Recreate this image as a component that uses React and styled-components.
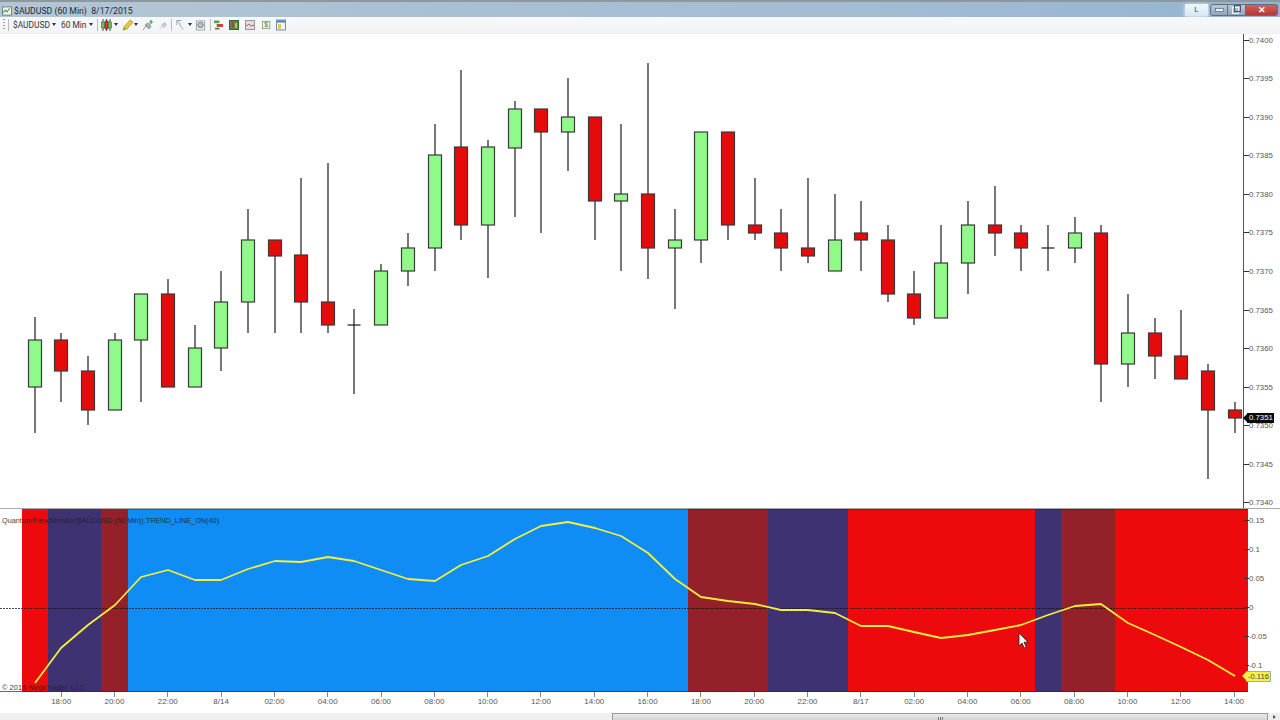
import React from "react";
import styled, { createGlobalStyle } from "styled-components";

const GREEN = "#90f98a";
const RED = "#e60b0b";

// x, wick top, wick bottom, body top, body bottom, colour
const candles = [
  [35, 317, 433, 340, 387, "g"],
  [61, 333, 402, 340, 371, "r"],
  [88, 356, 425, 371, 410, "r"],
  [115, 333, 410, 340, 410, "g"],
  [141, 294, 402, 294, 340, "g"],
  [168, 279, 387, 294, 387, "r"],
  [195, 325, 387, 348, 387, "g"],
  [221, 271, 371, 302, 348, "g"],
  [248, 209, 333, 240, 302, "g"],
  [275, 240, 333, 240, 256, "r"],
  [301, 178, 333, 255, 302, "r"],
  [328, 163, 333, 302, 325, "r"],
  [354, 309, 394, 325, 325, "d"],
  [381, 264, 325, 271, 325, "g"],
  [408, 233, 286, 248, 271, "g"],
  [435, 124, 271, 155, 248, "g"],
  [461, 70, 240, 147, 225, "r"],
  [488, 140, 278, 147, 225, "g"],
  [515, 101, 217, 109, 148, "g"],
  [541, 109, 233, 109, 132, "r"],
  [568, 78, 171, 117, 132, "g"],
  [595, 117, 240, 117, 201, "r"],
  [621, 124, 271, 194, 201, "g"],
  [648, 63, 279, 194, 248, "r"],
  [675, 209, 309, 240, 248, "g"],
  [701, 132, 263, 132, 240, "g"],
  [728, 132, 240, 132, 225, "r"],
  [755, 178, 240, 225, 233, "r"],
  [781, 209, 271, 233, 248, "r"],
  [808, 178, 263, 248, 256, "r"],
  [835, 194, 271, 240, 271, "g"],
  [861, 201, 271, 233, 240, "r"],
  [888, 225, 302, 240, 294, "r"],
  [914, 271, 325, 294, 318, "r"],
  [941, 225, 318, 263, 318, "g"],
  [968, 201, 294, 225, 263, "g"],
  [995, 186, 256, 225, 233, "r"],
  [1021, 225, 271, 233, 248, "r"],
  [1048, 225, 271, 248, 248, "d"],
  [1075, 217, 263, 233, 248, "g"],
  [1101, 225, 402, 233, 364, "r"],
  [1128, 294, 387, 333, 364, "g"],
  [1155, 318, 379, 333, 356, "r"],
  [1181, 310, 379, 356, 379, "r"],
  [1208, 364, 479, 371, 410, "r"],
  [1235, 402, 433, 410, 418, "r"],
];

const bands = [
  [22, 48, "#ec0a0c"],
  [48, 101, "#3f3272"],
  [101, 128, "#942029"],
  [128, 688, "#0f8df5"],
  [688, 768, "#942029"],
  [768, 848, "#3f3272"],
  [848, 1035, "#ec0a0c"],
  [1035, 1061, "#3f3272"],
  [1061, 1115, "#942029"],
  [1115, 1248, "#ec0a0c"],
];

const trend =
  "35,683 61,648 88,625 115,605 141,577 168,570 195,580 221,580 248,569 275,561 301,562 328,557 354,561 381,570 408,579 435,581 461,565 488,556 515,539 541,526 568,522 595,528 621,536 648,553 675,579 701,597 728,601 755,604 781,610 808,610 835,613 861,626 888,626 914,632 941,638 968,635 995,630 1021,625 1048,615 1075,606 1101,604 1128,623 1155,635 1181,647 1208,660 1235,676";

const prices = ["0.7400", "0.7395", "0.7390", "0.7385", "0.7380", "0.7375", "0.7370", "0.7365", "0.7360", "0.7355", "0.7350", "0.7345", "0.7340"];
const levels = ["0.15", "0.1", "0.05", "0", "-0.05", "-0.1"];
const times = ["18:00", "20:00", "22:00", "8/14", "02:00", "04:00", "06:00", "08:00", "10:00", "12:00", "14:00", "16:00", "18:00", "20:00", "22:00", "8/17", "02:00", "04:00", "06:00", "08:00", "10:00", "12:00", "14:00"];

const GlobalStyle = createGlobalStyle`
  html, body {
    margin: 0;
    padding: 0;
    background: #fff;
  }
  body {
    font-family: "Liberation Sans", Arial, sans-serif;
    overflow: hidden;
  }
`;

const Window = styled.div`
  display: flex;
  flex-direction: column;
  width: 1280px;
  height: 720px;
  overflow: hidden;
  background: #fff;
`;

const TitleBar = styled.div`
  display: flex;
  align-items: center;
  flex: 0 0 17px;
  box-sizing: border-box;
  padding: 2px 2px 0 2px;
  border-top: 2px solid #8d979e;
  background: linear-gradient(90deg, #b4c6d4 0%, #a9c0d3 35%, #a2bcd4 70%, #93b4d2 100%);
`;

const TitleText = styled.span`
  margin-left: 2px;
  font-family: Roboto, sans-serif;
  font-size: 8.7px;
  color: #1d2a36;
  white-space: pre;
`;

const WindowButtons = styled.div`
  display: flex;
  margin-left: auto;
  height: 12px;
  margin-top: -2px;
`;

const LayoutButton = styled.div`
  display: flex;
  align-items: center;
  justify-content: center;
  width: 23px;
  margin-right: 2px;
  font-size: 8px;
  color: #33506a;
  background: linear-gradient(#f0f7fc, #d8e8f4);
  box-shadow: 0 1px 4px rgba(255, 255, 255, 0.8);
`;

const CaptionButton = styled.div`
  display: flex;
  align-items: center;
  justify-content: center;
  width: ${(p) => p.$w}px;
  box-sizing: border-box;
  border: 1px solid #5d6f7f;
  border-left-width: ${(p) => (p.$first ? 1 : 0)}px;
  border-radius: ${(p) => p.$radius || 0};
  background: ${(p) => p.$bg};
  color: #fff;
  font-size: 9px;
  font-weight: bold;
`;

const Toolbar = styled.div`
  display: flex;
  align-items: center;
  flex: 0 0 17px;
  box-sizing: border-box;
  padding: 0 0 1px 3px;
  background: linear-gradient(#f7f8fa, #f3f4f6);
  border-bottom: 1px solid #eceef0;
  font-family: Roboto, sans-serif;
  font-size: 8.4px;
  color: #333;
`;

const Grip = styled.div`
  width: 2px;
  height: 12px;
  margin-right: 2px;
  background: repeating-linear-gradient(#999 0 1px, transparent 1px 3px);
`;

const Separator = styled.div`
  flex: none;
  width: 1px;
  height: 12px;
  margin: 0 ${(p) => p.$right ?? 3}px 0 ${(p) => p.$left ?? 3}px;
  background: #b9bdc2;
`;

const ToolText = styled.span`
  flex: none;
  width: ${(p) => p.$w}px;
  margin-left: ${(p) => p.$left ?? 0}px;
  white-space: nowrap;
`;

const Caret = styled.span`
  flex: none;
  width: 0;
  height: 0;
  margin-left: ${(p) => p.$left ?? 4}px;
  border: 2px solid transparent;
  border-top: 3px solid #333;
  border-bottom: 0;
`;

const ToolIcon = styled.svg`
  flex: none;
  width: ${(p) => p.$w || 11}px;
  height: 12px;
  margin-left: ${(p) => p.$left ?? 0}px;
`;

const ChartPane = styled.div`
  position: relative;
  display: flex;
  flex: 0 0 475px;
  box-sizing: border-box;
  border-bottom: 1px solid #aaa;
`;

const PriceAxis = styled.div`
  display: flex;
  flex-direction: column;
  gap: 28.58px;
  flex: 1;
  padding-top: 1px;
  margin-left: -1px;
  border-left: 1px solid #555;
`;

const Tick = styled.div`
  display: flex;
  align-items: center;
  height: 10px;
  font-size: 7.8px;
  color: #555;
  &::before {
    content: "";
    width: 5px;
    height: 1px;
    background: #333;
  }
`;

const PriceTag = styled.div`
  position: absolute;
  left: 1247px;
  top: 379px;
  height: 10px;
  padding: 0 1px 0 2px;
  font-size: 7.8px;
  line-height: 10px;
  color: #fff;
  background: #0a0a0a;
  &::before {
    content: "";
    position: absolute;
    left: -4px;
    top: 1px;
    border: 4px solid transparent;
    border-left: 0;
    border-right-color: #0a0a0a;
  }
`;

const IndicatorPane = styled.div`
  position: relative;
  display: flex;
  flex: 0 0 183px;
`;

const LevelAxis = styled.div`
  position: relative;
  display: flex;
  flex-direction: column;
  gap: 19.2px;
  flex: 1;
  padding-top: 6px;
  margin-left: -4px;
`;

const Legend = styled.div`
  position: absolute;
  left: 2px;
  top: 7px;
  font-size: 7.3px;
  line-height: 10px;
  color: #222;
  opacity: 0.85;
  white-space: nowrap;
`;

const Copyright = styled.div`
  position: absolute;
  left: 2px;
  bottom: 0;
  font-size: 7.5px;
  line-height: 9px;
  color: #222;
  opacity: 0.85;
  white-space: nowrap;
`;

const LevelTag = styled.div`
  position: absolute;
  left: 1246px;
  top: 162px;
  height: 9px;
  padding: 0 1px 0 2px;
  font-size: 7.6px;
  line-height: 9px;
  color: #444;
  background: #f3f24c;
  border: 1px solid #aaa;
  border-left: 0;
  &::before {
    content: "";
    position: absolute;
    left: -4px;
    top: 0;
    border: 4.5px solid transparent;
    border-left: 0;
    border-right-color: #f3f24c;
  }
`;

const TimeAxis = styled.div`
  display: flex;
  flex: 0 0 21px;
  box-sizing: border-box;
  padding-left: 34.5px;
`;

const TimeTick = styled.div`
  display: flex;
  flex-direction: column;
  align-items: center;
  flex: 0 0 53.32px;
  font-size: 8px;
  line-height: 10px;
  color: #555;
  &::before {
    content: "";
    width: 1px;
    height: 5px;
    background: #888;
  }
`;

const ScrollBar = styled.div`
  display: flex;
  flex: 1;
  background: #efefef;
`;

const ScrollTrack = styled.div`
  flex: 0 0 612px;
`;

const ScrollThumb = styled.div`
  display: flex;
  justify-content: center;
  flex: 1;
  box-sizing: border-box;
  padding: 3px 0 0 0;
  border: 1px solid #999;
  border-bottom: 0;
  background: linear-gradient(#e9e9e9, #d4d4d4);
  &::before {
    content: "";
    width: 5px;
    height: 3px;
    background: repeating-linear-gradient(90deg, #777 0 1px, transparent 1px 2px);
  }
`;

const ScrollArrow = styled.div`
  flex: 0 0 12px;
  display: flex;
  justify-content: center;
  padding-top: 2px;
  &::before {
    content: "";
    height: 0;
    border: 2.5px solid transparent;
    border-left: 3px solid #555;
    border-right: 0;
  }
`;

const ChartSvg = styled.svg`
  flex: none;
  display: block;
`;

function Candle({ c }) {
  const [x, wt, wb, bt, bb, kind] = c;
  return (
    <g>
      <line x1={x} x2={x} y1={wt} y2={wb} stroke="#1c1c1c" strokeWidth="1.2" />
      {kind === "d" ? (
        <line x1={x - 6.5} x2={x + 6.5} y1={bt} y2={bt} stroke="#1c1c1c" strokeWidth="1.2" />
      ) : (
        <rect
          x={x - 6.5}
          y={bt}
          width="13"
          height={bb - bt}
          fill={kind === "g" ? GREEN : RED}
          stroke="#3a3a3a"
          strokeWidth="1.2"
        />
      )}
    </g>
  );
}

function Indicator() {
  return (
    <ChartSvg width="1248" height="183" viewBox="0 509 1248 183">
      {bands.map(([a, b, fill]) => (
        <rect key={a} x={a} y="509" width={b - a} height="183" fill={fill} />
      ))}
      <line x1="128" x2="1248" y1="509.5" y2="509.5" stroke="#000" strokeOpacity="0.25" />
      <line x1="0" x2="1248" y1="691.5" y2="691.5" stroke="#134" strokeOpacity="0.7" />
      <line x1="0" x2="1248" y1="608.5" y2="608.5" stroke="#111" strokeOpacity="0.75" strokeDasharray="2 1" />
      <polyline points={trend} fill="none" stroke="#f4ee3e" strokeWidth="1.8" strokeLinejoin="round" />
      <path
        d="M1019 633 v13 l3-3 2.2 5 2-.9-2.2-4.900 h4z"
        fill="#fff"
        stroke="#222"
        strokeWidth="0.8"
      />
    </ChartSvg>
  );
}

export default function App() {
  return (
    <Window>
      <GlobalStyle />
      <TitleBar>
        <ToolIcon viewBox="0 0 11 12" $w={10}>
          <rect x="0.5" y="1.500" width="10" height="9" fill="#f2f6ee" stroke="#56808f" />
          <path d="M1.500 8l2-3 2 2 3-4" fill="none" stroke="#3f9a4a" strokeWidth="1.2" />
        </ToolIcon>
        <TitleText>$AUDUSD (60 Min)  8/17/2015</TitleText>
        <WindowButtons>
          <LayoutButton>L</LayoutButton>
          <CaptionButton $w={18} $first $radius="3px 0 0 3px" $bg="linear-gradient(#bccad6, #8ea5b9)">
            <svg width="9" height="4" viewBox="0 0 9 4">
              <rect x="0.5" y="0.5" width="8" height="3" fill="#e9eef2" stroke="#465766" strokeWidth="0.6" />
            </svg>
          </CaptionButton>
          <CaptionButton $w={18} $bg="linear-gradient(#bccad6, #8ea5b9)">
            <svg width="9" height="9" viewBox="0 0 9 9">
              <rect x="0.500" y="2.500" width="6" height="6" fill="none" stroke="#f0f3f5" />
              <rect x="2.500" y="0.500" width="6" height="6" fill="none" stroke="#465766" />
            </svg>
          </CaptionButton>
          <CaptionButton $w={32} $radius="0 3px 3px 0" $bg="linear-gradient(#d0625c, #b23a36)">
            ✕
          </CaptionButton>
        </WindowButtons>
      </TitleBar>

      <Toolbar>
        <Grip />
        <Separator $left={1} $right={4} />
        <ToolText $w={35}>$AUDUSD</ToolText>
        <Caret $left={4} />
        <ToolText $w={24} $left={5}>60 Min</ToolText>
        <Caret $left={4} />
        <Separator $left={4} $right={3} />
        <ToolIcon viewBox="0 0 11 12">
          <path d="M2 0v12M5.500 0v12M9 0v12" stroke="#444" />
          <rect x="0.500" y="3" width="3" height="6" fill="#6fc04c" stroke="#3a6a2c" strokeWidth="0.6" />
          <rect x="4" y="2" width="3" height="8" fill="#d33" stroke="#722" strokeWidth="0.6" />
          <rect x="7.500" y="3" width="3" height="6" fill="#6fc04c" stroke="#3a6a2c" strokeWidth="0.6" />
        </ToolIcon>
        <Caret $left={2} />
        <ToolIcon viewBox="0 0 12 12" $w={12} $left={4}>
          <path d="M1 11l1-3 6-7 3 2-6 7z" fill="#e9c83c" stroke="#a58a24" strokeWidth="0.7" />
          <path d="M1 11l1-3 2 2z" fill="#7fb23e" />
        </ToolIcon>
        <Caret $left={0} />
        <ToolIcon viewBox="0 0 12 12" $w={12} $left={4}>
          <path d="M1 11l3-4M3 6l3-2 3 3-2 3z" fill="#a6b2bb" stroke="#7b8790" strokeWidth="0.8" />
          <path d="M9 1v4M7 3h4" stroke="#3fa34a" strokeWidth="1.2" />
        </ToolIcon>
        <ToolIcon viewBox="0 0 12 12" $w={10} $left={5}>
          <path d="M1 11l3-4M3 6l4-3 2 3-3 3z" fill="#c8cccf" stroke="#b4b8bb" strokeWidth="0.8" />
        </ToolIcon>
        <Separator $left={2} $right={4} />
        <ToolIcon viewBox="0 0 11 12" $w={10}>
          <path d="M1 1l4 4-1 1 4 5M1 1h5M1 1v5" fill="none" stroke="#8b939a" strokeWidth="0.9" />
        </ToolIcon>
        <Caret $left={2} />
        <ToolIcon viewBox="0 0 12 12" $w={11} $left={3}>
          <rect x="1.500" y="1.500" width="9" height="10" fill="#eef0f0" stroke="#9ba3a8" />
          <circle cx="6" cy="6" r="3" fill="#b9c2c8" stroke="#6f787e" />
        </ToolIcon>
        <Separator $left={4} $right={3} />
        <ToolIcon viewBox="0 0 11 12" $w={10}>
          <rect x="0" y="1" width="6" height="3" fill="#57a644" />
          <rect x="3" y="5" width="7" height="3" fill="#c93434" />
          <rect x="1" y="9" width="5" height="2" fill="#4d8f3d" />
        </ToolIcon>
        <ToolIcon viewBox="0 0 11 12" $w={11} $left={5}>
          <rect x="0.500" y="1.500" width="9" height="9" fill="#4f8a4a" stroke="#38663a" />
          <rect x="3" y="3" width="2" height="6" fill="#c43a3a" />
          <rect x="6" y="4" width="2" height="5" fill="#a8d24e" />
        </ToolIcon>
        <ToolIcon viewBox="0 0 11 12" $w={11} $left={5}>
          <rect x="0.500" y="1.500" width="9" height="9" fill="#e7dcdc" stroke="#8c9aa4" />
          <path d="M1 7l3-2 2 2 3-1" fill="none" stroke="#b36060" />
        </ToolIcon>
        <ToolIcon viewBox="0 0 11 12" $w={9} $left={6}>
          <rect x="0.500" y="1.500" width="9" height="9" fill="#f1f6ea" stroke="#7c9c7c" />
          <text x="5" y="9" fontSize="8" textAnchor="middle" fill="#2f7a3a" fontFamily="Liberation Sans">$</text>
        </ToolIcon>
        <ToolIcon viewBox="0 0 11 12" $left={5}>
          <rect x="0.500" y="1" width="9" height="10" fill="#eef4f8" stroke="#6d8fb2" />
          <rect x="1" y="1.500" width="8" height="2" fill="#4a7eb5" />
          <rect x="2" y="5" width="3" height="5" fill="#e4c660" />
        </ToolIcon>
      </Toolbar>

      <ChartPane>
        <ChartSvg width="1244" height="474" viewBox="0 34 1244 474">
          {candles.map((c) => (
            <Candle key={c[0]} c={c} />
          ))}
        </ChartSvg>
        <PriceAxis>
          {prices.map((p) => (
            <Tick key={p}>{p}</Tick>
          ))}
        </PriceAxis>
        <PriceTag>0.7351</PriceTag>
      </ChartPane>

      <IndicatorPane>
        <Indicator />
        <LevelAxis>
          {levels.map((l) => (
            <Tick key={l}>{l}</Tick>
          ))}
        </LevelAxis>
        <Legend>QuantumTrendMonitor($AUDUSD (60 Min)).TREND_LINE_ON(40)</Legend>
        <Copyright>© 2015 NinjaTrader, LLC</Copyright>
        <LevelTag>-0.116</LevelTag>
      </IndicatorPane>

      <TimeAxis>
        {times.map((t, i) => (
          <TimeTick key={i}>{t}</TimeTick>
        ))}
      </TimeAxis>

      <ScrollBar>
        <ScrollTrack />
        <ScrollThumb />
        <ScrollArrow />
      </ScrollBar>
    </Window>
  );
}
